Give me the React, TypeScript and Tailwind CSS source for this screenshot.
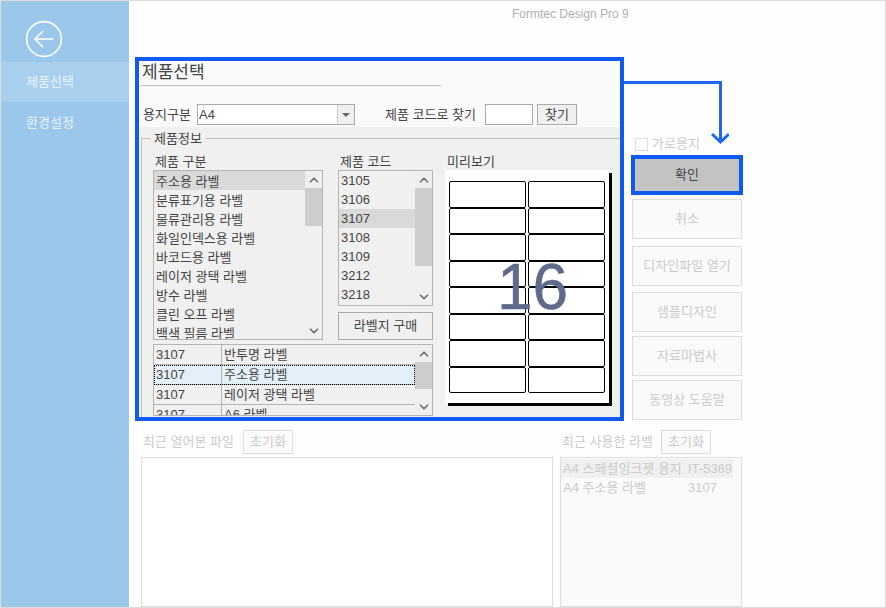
import React from "react";
import { ChevronDown, ChevronUp } from "lucide-react";

const categories = [
  "주소용 라벨",
  "분류표기용 라벨",
  "물류관리용 라벨",
  "화일인덱스용 라벨",
  "바코드용 라벨",
  "레이저 광택 라벨",
  "방수 라벨",
  "클린 오프 라벨",
  "백색 필름 라벨",
];
const codes = ["3105", "3106", "3107", "3108", "3109", "3212", "3218"];
const results = [
  { code: "3107", name: "반투명 라벨" },
  { code: "3107", name: "주소용 라벨", focused: true },
  { code: "3107", name: "레이저 광택 라벨" },
  { code: "3107", name: "A6 라벨" },
];
const sideButtons = [
  { label: "취소", cls: "mt-[4px]" },
  { label: "디자인파일 열기", cls: "mt-[7px]" },
  { label: "샘플디자인", cls: "mt-[6px]" },
  { label: "자료마법사", cls: "mt-[4px]" },
  { label: "동영상 도움말", cls: "mt-[4px]" },
];

const Scrollbar = ({ thumb }: { thumb: string }) => (
  <div className="w-[17px] h-full shrink-0 flex flex-col items-center bg-[#efefef]">
    <div className="h-[17px] flex items-center justify-center text-[#6e6e6e]">
      <ChevronUp size={14} strokeWidth={3} />
    </div>
    <div className={`w-full bg-[#cdcdcd] ${thumb}`} />
    <div className="flex-1" />
    <div className="h-[17px] flex items-center justify-center text-[#6e6e6e]">
      <ChevronDown size={14} strokeWidth={3} />
    </div>
  </div>
);

export default function App() {
  return (
    <div className="w-[886px] h-[608px] flex border border-[#dcdcdc] bg-[#fefefe] overflow-hidden text-[13px] text-[#444] font-['Liberation_Sans','Noto_Sans_CJK_KR',sans-serif]">
      {/* Sidebar */}
      <aside className="w-[128px] shrink-0 bg-[#9ac7ea] text-[#eaf3fb]">
        <div className="h-[61px] pl-[24px] pt-[19px]">
          <svg width="38" height="38" viewBox="0 0 38 38" fill="none" stroke="#fff" strokeWidth="1.6">
            <circle cx="19" cy="19" r="17.4" />
            <path d="M28.5 19H10M18 11l-8 8 8 8" />
          </svg>
        </div>
        <div className="h-[40px] pl-[25px] flex items-center bg-[#a9d0ef]">제품선택</div>
        <div className="mt-px h-[40px] pl-[25px] flex items-center">환경설정</div>
      </aside>

      <main className="relative flex-1 flex flex-col min-w-0">
        <div className="h-[56px] pl-[383px] pt-[5px] text-[12px] text-[#b0b0b0] leading-[17px]">Formtec Design Pro 9</div>

        <div className="flex items-start">
          {/* Selection panel */}
          <section className="ml-[6px] w-[489px] h-[364px] shrink-0 border-4 border-[#0f5bf0] bg-[#fafafa]">
            <div className="h-[66px]">
              <div className="ml-[2px] pl-px w-[300px] h-[25px] border-b border-[#bbb] text-[17px] leading-[24px] text-[#444]">제품선택</div>
              <div className="mt-[18px] flex items-center h-[21px]">
                <span className="ml-[4px] w-[54px]">용지구분</span>
                <div className="w-[158px] h-full flex border border-[#aaa] bg-white">
                  <span className="flex-1 pl-[1px] leading-[19px]">A4</span>
                  <div className="w-[17px] border-l border-[#ccc] bg-[#f0f0f0] flex items-center justify-center">
                    <div className="border-x-[4px] border-t-[4px] border-x-transparent border-t-[#666]" />
                  </div>
                </div>
                <span className="ml-[30px] w-[100px]">제품 코드로 찾기</span>
                <div className="w-[48px] h-full border border-[#aaa] bg-white" />
                <button className="ml-[4px] w-[40px] h-full border border-[#aaa] bg-[#f0f0f0]">찾기</button>
              </div>
            </div>

            <div className="h-[290px] bg-[#f0f0f0] pt-[11px]">
              <div className="relative ml-[2px] h-[279px] border-t border-l border-[#c0c0c0] pt-[14px] pl-[11px] flex items-start">
                <span className="absolute left-[8px] -top-[9px] px-[4px] leading-[17px] bg-[#f0f0f0]">제품정보</span>

                <div className="w-[280px] shrink-0">
                  <div className="flex gap-[15px]">
                    <div className="w-[170px]">
                      <div className="h-[17px] pl-[2px] leading-[17px]">제품 구분</div>
                      <div className="h-[170px] flex border border-[#b4b4b4] bg-[#f0f0f0] overflow-hidden">
                        <ul className="flex-1 min-w-0">
                          {categories.map((c, i) => (
                            <li key={c} className={`h-[19px] pl-[2px] leading-[21px] whitespace-nowrap ${i === 0 ? "bg-[#d9d9d9]" : ""}`}>
                              {c}
                            </li>
                          ))}
                        </ul>
                        <Scrollbar thumb="h-[38px]" />
                      </div>
                    </div>
                    <div className="w-[95px]">
                      <div className="h-[17px] pl-[2px] leading-[17px]">제품 코드</div>
                      <div className="h-[136px] flex border border-[#b4b4b4] bg-[#f0f0f0] overflow-hidden">
                        <ul className="flex-1 min-w-0">
                          {codes.map((c) => (
                            <li key={c} className={`h-[19px] pl-[2px] leading-[20px] ${c === "3107" ? "bg-[#d9d9d9]" : ""}`}>
                              {c}
                            </li>
                          ))}
                        </ul>
                        <Scrollbar thumb="h-[78px]" />
                      </div>
                      <button className="mt-[6px] w-full h-[28px] border border-[#aaa] bg-[#f0f0f0]">라벨지 구매</button>
                    </div>
                  </div>

                  <div className="mt-[4px] h-[72px] flex border border-[#b4b4b4] bg-[#f0f0f0] overflow-hidden">
                    <div className="flex-1 min-w-0">
                      {results.map((r) => (
                        <div
                          key={r.name}
                          className={`h-[20px] flex border-b border-[#b4b4b4] leading-[19px] ${
                            r.focused ? "bg-[#e4f0f9] outline outline-1 -outline-offset-1 outline-dotted outline-black" : ""
                          }`}
                        >
                          <span className="w-[68px] pl-[2px] border-r border-[#b4b4b4]">{r.code}</span>
                          <span className="pl-[2px]">{r.name}</span>
                        </div>
                      ))}
                    </div>
                    <Scrollbar thumb="h-[27px]" />
                  </div>
                </div>

                <div className="ml-[12px] w-[164px] shrink-0">
                  <div className="h-[17px] pl-[2px] leading-[17px]">미리보기</div>
                  <div className="relative h-[233px] bg-white shadow-[3px_3px_0_#000] pt-[11px] px-[4px] grid grid-cols-2 gap-x-[2px] content-start">
                    {Array.from({ length: 16 }).map((_, i) => (
                      <div key={i} className="h-[26.5px] border border-black rounded-[2px]" />
                    ))}
                    <span className="absolute left-[52px] top-[80px] text-[64px] leading-[74px] text-[#5f6b8c] [-webkit-text-stroke:0.5px_#5f6b8c]">16</span>
                  </div>
                </div>
              </div>
            </div>
          </section>

          {/* Actions */}
          <div className="ml-[8px] w-[110px] shrink-0 pt-[80px] text-[#cbcbcb]">
            <label className="h-[14px] pl-[3px] flex items-center gap-[4px]">
              <span className="w-[13px] h-[13px] border border-[#ddd] bg-white" />
              가로용지
            </label>
            <button className="mt-[4px] -ml-px w-[112px] h-[40px] border-4 border-[#0f5bf0] bg-[#c3c3c3] text-[#444]">확인</button>
            {sideButtons.map((b) => (
              <button key={b.label} className={`w-full h-[40px] border border-[#ddd] bg-[#fafafa] block ${b.cls}`}>
                {b.label}
              </button>
            ))}
          </div>
        </div>

        {/* Recent files and labels */}
        <div className="flex-1 flex gap-[7px] pl-[12px] text-[#cbcbcb]">
          <div className="w-[412px] flex flex-col">
            <div className="mt-[9px] h-[24px] flex items-center">
              <span className="ml-[2px] w-[100px]">최근 열어본 파일</span>
              <button className="w-[50px] h-full border border-[#ddd] bg-[#fafafa]">초기화</button>
            </div>
            <div className="mt-[3px] flex-1 border border-[#ddd] bg-white" />
          </div>
          <div className="w-[182px] flex flex-col">
            <div className="mt-[9px] h-[24px] flex items-center">
              <span className="ml-[2px] w-[99px]">최근 사용한 라벨</span>
              <button className="w-[50px] h-full border border-[#ddd] bg-[#fafafa]">초기화</button>
            </div>
            <div className="mt-[3px] flex-1 border border-[#ddd] bg-[#fafafa] pt-px">
              <div className="w-[172px] h-[19px] flex items-center pl-[2px] bg-[#f0f0f0] whitespace-nowrap">
                <span className="w-[125px]">A4 스페셜잉크젯 용지</span>
                <span>IT-5369</span>
              </div>
              <div className="w-[172px] h-[19px] flex items-center pl-[2px] whitespace-nowrap">
                <span className="w-[125px]">A4 주소용 라벨</span>
                <span>3107</span>
              </div>
            </div>
          </div>
        </div>

        {/* Annotation arrow from the panel to the OK button */}
        <svg className="absolute left-[495px] top-[76px]" width="105" height="68" viewBox="0 0 105 68" fill="none" stroke="#1f66f0" strokeWidth="3">
          <path d="M0 5.5H96.5V64" />
          <path d="M88 57l8.5 8 8.5-8" />
        </svg>
      </main>
    </div>
  );
}
